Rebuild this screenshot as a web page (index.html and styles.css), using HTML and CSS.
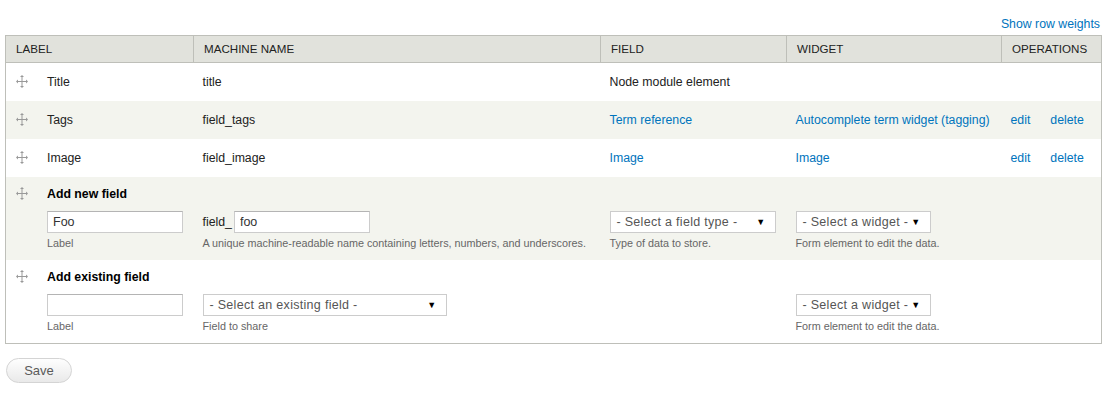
FILE: index.html
```html
<!DOCTYPE html>
<html lang="en">
<head>
    <meta charset="UTF-8">
    <title>Manage fields</title>
    <link rel="stylesheet" href="styles.css">
</head>
<body>
    <div class="weights-toggle"><a href="#">Show row weights</a></div>

    <table class="field-overview">
        <colgroup>
            <col class="col-label">
            <col class="col-machine">
            <col class="col-field">
            <col class="col-widget">
            <col class="col-ops">
        </colgroup>
        <thead>
            <tr>
                <th>Label</th>
                <th>Machine name</th>
                <th>Field</th>
                <th>Widget</th>
                <th>Operations</th>
            </tr>
        </thead>
        <tbody>
            <tr>
                <td><span class="handle"><svg width="12" height="13" viewBox="0 0 12 13"><path d="M6 1v11M1 6.5h10" stroke="#999" stroke-width="1" fill="none"/><path d="M6 0l-2 2h4zM6 13l-2-2h4zM0 6.5l2-2v4zM12 6.5l-2-2v4z" fill="#999"/></svg></span>Title</td>
                <td>title</td>
                <td>Node module element</td>
                <td></td>
                <td></td>
            </tr>
            <tr class="even">
                <td><span class="handle"><svg width="12" height="13" viewBox="0 0 12 13"><path d="M6 1v11M1 6.5h10" stroke="#999" stroke-width="1" fill="none"/><path d="M6 0l-2 2h4zM6 13l-2-2h4zM0 6.5l2-2v4zM12 6.5l-2-2v4z" fill="#999"/></svg></span>Tags</td>
                <td>field_tags</td>
                <td><a href="#">Term reference</a></td>
                <td><a href="#">Autocomplete term widget (tagging)</a></td>
                <td class="ops"><a href="#">edit</a><a href="#">delete</a></td>
            </tr>
            <tr>
                <td><span class="handle"><svg width="12" height="13" viewBox="0 0 12 13"><path d="M6 1v11M1 6.5h10" stroke="#999" stroke-width="1" fill="none"/><path d="M6 0l-2 2h4zM6 13l-2-2h4zM0 6.5l2-2v4zM12 6.5l-2-2v4z" fill="#999"/></svg></span>Image</td>
                <td>field_image</td>
                <td><a href="#">Image</a></td>
                <td><a href="#">Image</a></td>
                <td class="ops"><a href="#">edit</a><a href="#">delete</a></td>
            </tr>
            <tr class="even add-row">
                <td>
                    <div class="add-cell">
                        <span class="handle"><svg width="12" height="13" viewBox="0 0 12 13"><path d="M6 1v11M1 6.5h10" stroke="#999" stroke-width="1" fill="none"/><path d="M6 0l-2 2h4zM6 13l-2-2h4zM0 6.5l2-2v4zM12 6.5l-2-2v4z" fill="#999"/></svg></span>
                        <div>
                            <div class="add-title">Add new field</div>
                            <input class="text-input" type="text" value="Foo">
                            <div class="description">Label</div>
                        </div>
                    </div>
                </td>
                <td class="pushed">
                    <span class="prefix">field_</span><input class="text-input" type="text" value="foo">
                    <div class="description">A unique machine-readable name containing letters, numbers, and underscores.</div>
                </td>
                <td class="pushed">
                    <span class="select select-type">- Select a field type -</span>
                    <div class="description">Type of data to store.</div>
                </td>
                <td class="pushed">
                    <span class="select select-widget">- Select a widget -</span>
                    <div class="description">Form element to edit the data.</div>
                </td>
                <td></td>
            </tr>
            <tr class="add-row">
                <td>
                    <div class="add-cell">
                        <span class="handle"><svg width="12" height="13" viewBox="0 0 12 13"><path d="M6 1v11M1 6.5h10" stroke="#999" stroke-width="1" fill="none"/><path d="M6 0l-2 2h4zM6 13l-2-2h4zM0 6.5l2-2v4zM12 6.5l-2-2v4z" fill="#999"/></svg></span>
                        <div>
                            <div class="add-title">Add existing field</div>
                            <input class="text-input" type="text" value="">
                            <div class="description">Label</div>
                        </div>
                    </div>
                </td>
                <td class="pushed">
                    <span class="select select-existing">- Select an existing field -</span>
                    <div class="description">Field to share</div>
                </td>
                <td></td>
                <td class="pushed">
                    <span class="select select-widget">- Select a widget -</span>
                    <div class="description">Form element to edit the data.</div>
                </td>
                <td></td>
            </tr>
        </tbody>
    </table>

    <button class="button" type="button">Save</button>
</body>
</html>
```

FILE: styles.css
```css
body {
    font-family: "Liberation Sans", Arial, sans-serif;
    font-size: 12.3px;
    color: #333;
    background: #fff;
    margin: 0;
    padding: 0 8px 0 5px;
}
a {
    color: #0074bd;
    text-decoration: none;
}
.weights-toggle {
    text-align: right;
    padding: 16px 1px 0 0;
    height: 19px;
    line-height: 16px;
}
.field-overview {
    width: 1096px;
    table-layout: fixed;
    border-collapse: collapse;
    border: 1px solid #bebfb9;
}
.col-label { width: 188px; }
.col-machine { width: 407px; }
.col-field { width: 186px; }
.col-widget { width: 215px; }
.col-ops { width: 100px; }
.field-overview th {
    background: #e1e2dc;
    border: 1px solid #bebfb9;
    font-weight: normal;
    font-size: 11.6px;
    text-transform: uppercase;
    text-align: left;
    color: #222;
    padding: 4px 10px 5px;
    line-height: 17px;
    height: 17px;
}
.field-overview td {
    padding: 10px 10px 10px 9px;
    line-height: 18px;
    vertical-align: top;
    color: #222;
}
.field-overview td:first-child {
    padding-left: 10px;
}
.field-overview tr.even td {
    background: #f3f4ee;
}
.handle {
    display: inline-block;
    width: 12px;
    height: 13px;
    margin: 0 19px 0 0;
    vertical-align: -2px;
}
.handle svg {
    display: block;
}
.ops a {
    margin-right: 20px;
}
.add-row td {
    padding-top: 8px;
}
.add-row td.pushed {
    padding-top: 34px;
}
.add-cell {
    display: flex;
    align-items: flex-start;
}
.add-cell .handle {
    margin-top: 2px;
}
.add-title {
    font-weight: bold;
    color: #000;
    height: 18px;
    margin-bottom: 8px;
}
.text-input {
    box-sizing: border-box;
    width: 136px;
    height: 22px;
    border: 1px solid #ccc;
    border-top-color: #b4b4b4;
    padding: 2px 5px;
    font-family: "Liberation Sans", Arial, sans-serif;
    font-size: 12.5px;
    color: #333;
    margin: 0;
    vertical-align: top;
}
.prefix {
    display: inline-block;
    line-height: 22px;
    margin-right: 2px;
}
.select {
    position: relative;
    display: inline-block;
    box-sizing: border-box;
    height: 22px;
    line-height: 20px;
    border: 1px solid #ccc;
    background: #fff;
    padding: 0 6px;
    font-size: 12.5px;
    letter-spacing: 0.3px;
    color: #555;
}
.select::after {
    content: "\25BC";
    position: absolute;
    right: 9px;
    top: 0;
    font-size: 9px;
    color: #000;
}
.select-type { width: 166px; }
.select-widget { width: 135px; }
.select-existing { width: 244px; }
.description {
    font-size: 10.8px;
    color: #666;
    line-height: 14px;
    margin-top: 3px;
    white-space: nowrap;
}
.button {
    margin: 14px 0 0 1px;
    width: 66px;
    height: 25px;
    border: 1px solid #d4d4d4;
    border-radius: 20px;
    background: linear-gradient(#fefefe, #e9e9e9);
    font-family: "Liberation Sans", Arial, sans-serif;
    font-size: 13px;
    color: #5a5a5a;
    cursor: pointer;
}
```
